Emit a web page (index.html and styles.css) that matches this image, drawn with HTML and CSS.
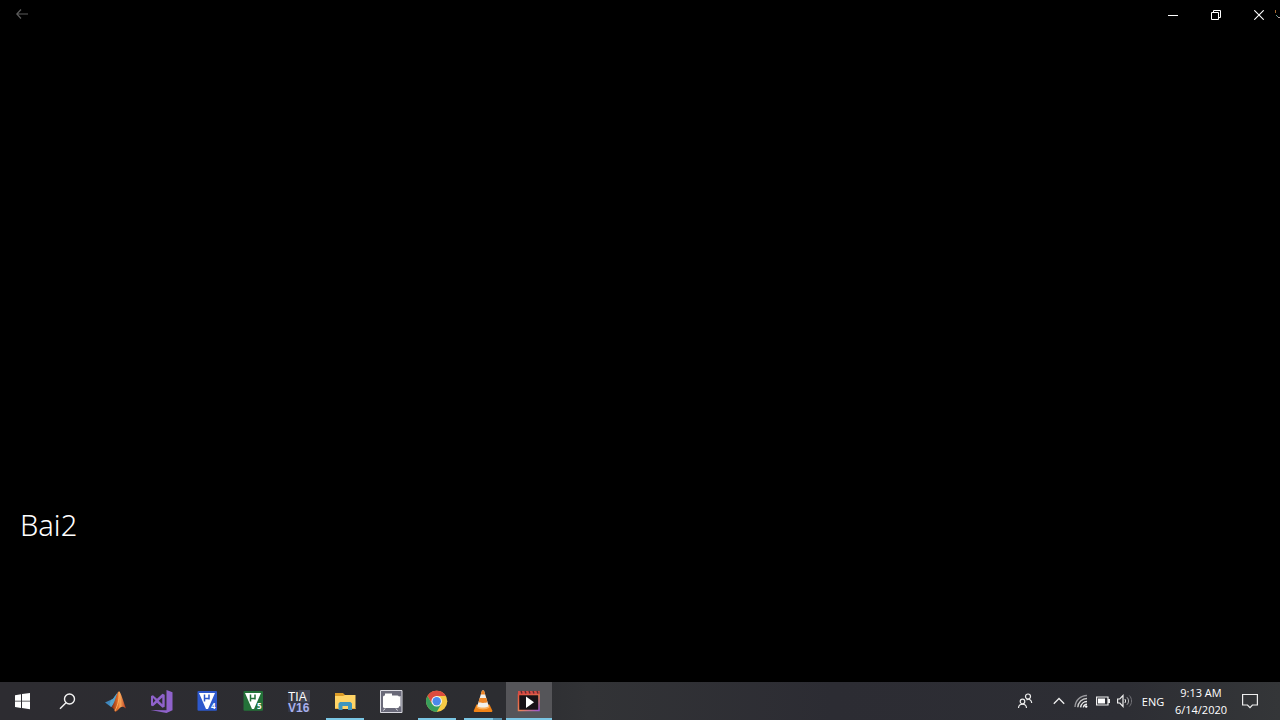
FILE: index.html
```html
<!DOCTYPE html>
<html lang="en">
<head>
    <meta charset="UTF-8">
    <meta name="viewport" content="width=device-width, initial-scale=1.0">
    <title>Bai2</title>
    <link rel="stylesheet" href="styles.css">
</head>
<body>
    <main class="player">
        <header class="titlebar">
            <button class="back" aria-label="Back">
                <svg width="12" height="10" viewBox="0 0 12 10"><path d="M5 .5.8 5 5 9.5M1 5h11" fill="none" stroke="#5c5c5c" stroke-width="1.2"/></svg>
            </button>
            <div class="window-buttons">
                <button aria-label="Minimize">
                    <svg width="10" height="10" viewBox="0 0 10 10"><path d="M0 5.5h10" stroke="#fff"/></svg>
                </button>
                <button aria-label="Restore">
                    <svg width="10" height="10" viewBox="0 0 10 10"><path d="M.5 2.5h7v7h-7zM2.5 2.5v-2h7v7h-2" fill="none" stroke="#fff"/></svg>
                </button>
                <button aria-label="Close">
                    <svg width="10" height="10" viewBox="0 0 10 10"><path d="M.3.3l9.4 9.4M9.7.3.3 9.7" stroke="#fff" stroke-width="1.1"/></svg>
                </button>
            </div>
            <svg class="edge" width="5" height="10" viewBox="0 0 5 10"><path d="M.5 0v3" stroke="#a4682f"/><path d="M1 5l2 2" stroke="#6c9c90"/><path d="M3 7.500h2" stroke="#b9a0a0"/></svg>
        </header>
        <h1 class="video-title">Bai2</h1>
    </main>

    <footer class="taskbar">
        <nav class="apps">
            <button aria-label="Start">
                <svg viewBox="0 0 46 38"><path d="M15 13.200l6-.9v6.400h-6zM22 12.100l8-1.100v7.700h-8zM15 19.600h6V26l-6-.9zM22 19.600h8V27.200l-8-1.100z" fill="#fff"/></svg>
            </button>
            <button aria-label="Search">
                <svg viewBox="0 0 46 38"><circle cx="23.500" cy="17" r="5" fill="none" stroke="#f4f4f4" stroke-width="1.400"/><path d="M20 20.700l-6 6" stroke="#f4f4f4" stroke-width="1.400"/></svg>
            </button>
            <button aria-label="MATLAB">
                <svg viewBox="0 0 46 38">
                    <defs><linearGradient id="peak"><stop offset="0" stop-color="#7e2c18"/><stop offset=".45" stop-color="#e8702a"/><stop offset=".6" stop-color="#f7a457"/><stop offset="1" stop-color="#b8341b"/></linearGradient></defs>
                    <path d="M13 20.500l6-2.700c2-.5 3-2.500 4.500-4.300l1 5-5.500 6.800c-1.500-1.800-3.500-3-6-4.800z" fill="#3f87bd"/>
                    <path d="M19 18c3-1 4.500-5.500 7-8l-3 9-3.500 6-2-2.500z" fill="#56a5ce"/>
                    <path d="M19.500 25c3-2.500 4.500-13 7.500-16 2 1.500 4.500 11 7 17.500-2.500-2-4-2.500-6-.7-1.500 1.500-3 3.600-5 4.200-.5-2.300-1.500-4-3.500-5z" fill="url(#peak)"/>
                    <path d="M27 10c.5 5-.5 12-4 19" fill="none" stroke="#ffc16b" stroke-width=".8"/>
                </svg>
            </button>
            <button aria-label="Visual Studio">
                <svg viewBox="0 0 46 38"><path d="M28.500 8l6 2.300v18L28.500 31l-16-3 16 .2zM13 14l2-.8 4 3.600 5.500-5 2.200 1v12l-2.200 1-5.500-5-4 3.500-2-.8zM15 16v5l2.500-2.500zM24.300 15.400l-3.600 3.400 3.600 3.400z" fill="#8f62cb" fill-rule="evenodd"/></svg>
            </button>
            <button aria-label="Keil uVision4">
                <svg viewBox="0 0 46 38"><rect x="13.500" y="9" width="19.500" height="19.700" rx="1" fill="#2d58cc"/><path d="M15 11h16l-7 16h-2z" fill="#fff"/><path d="M20.500 12.500v7M20.500 16.500h4.500v-4M25 16v1.500" fill="none" stroke="#2d58cc" stroke-width="1.500"/><text class="badge" x="27" y="27">4</text></svg>
            </button>
            <button aria-label="Keil uVision5">
                <svg viewBox="0 0 46 38"><rect x="13.500" y="9" width="19.500" height="19.700" rx="1" fill="#247139"/><path d="M15 11h16l-7 16h-2z" fill="#fff"/><path d="M20.500 12.500v7M20.500 16.500h4.500v-4M25 16v1.500" fill="none" stroke="#247139" stroke-width="1.500"/><text class="badge" x="27" y="27">5</text></svg>
            </button>
            <button aria-label="TIA Portal V16">
                <svg viewBox="0 0 46 38"><path d="M12 8h22v22H12z" fill="#343744"/><path d="M23 8h11v12H23z" fill="#414554"/><text class="tia" x="12" y="19">TIA</text><text class="tia version" x="12" y="30">V16</text></svg>
            </button>
            <button class="running" aria-label="File Explorer">
                <svg viewBox="0 0 46 38"><path d="M13 11h8l2 2h10v4H13z" fill="#dc9c27"/><path d="M13 14h8l2-1h10.500v14H13z" fill="#ffd466"/><path d="M16.500 28v-6.500l1.500-1.500h10.500l1.500 1.500V28h-4v-4h-5.500v4z" fill="#3e95bd"/><path d="M13 26h3.500v1H13zM30 26h3.500v1H30z" fill="#edb03f"/></svg>
            </button>
            <button aria-label="Screen Recorder">
                <svg viewBox="0 0 46 38"><path d="M12.500 8.500h21.500v22H12.500z" fill="#696979" stroke="#d9d9e0"/><rect x="15" y="13.500" width="16" height="12.500" rx="1.500" fill="#fff"/><path d="M17 11.500h7V14h-7zM30 15l2.500-1v10.500L30 24z" fill="#fff"/><path d="M17 26.500l-1.500 2M28 26.500l1.500 2" stroke="#e4e4ea"/></svg>
            </button>
            <button class="running" aria-label="Google Chrome">
                <svg viewBox="0 0 46 38"><circle cx="22.700" cy="19.300" r="10.600" fill="#f7cb45"/><path d="M13.500 14a10.600 10.600 0 0 1 18.400 0H22.700l-4.600 8z" fill="#dc4b3e"/><path d="M13.500 14a10.600 10.600 0 0 0 9.200 15.900l4.600-8-9.200 0z" fill="#389e5c"/><circle cx="22.700" cy="19.300" r="5.300" fill="#f5f5f5"/><circle cx="22.700" cy="19.300" r="4.200" fill="#4b89ec"/></svg>
            </button>
            <button class="running grouped" aria-label="VLC media player">
                <svg viewBox="0 0 46 38"><path d="M16.500 22.500h13l3 6.500-.7 1H14.300l-.7-1z" fill="#f08316"/><path d="M22 8.500h2L29 25c-2 2.200-10 2.200-12 0z" fill="#f2f0ea"/><path d="M22 8.500h2l1.200 4h-4.400zM19.700 16h6.600l1.200 4c-2 1.200-7 1.200-9 0z" fill="#ee8424"/><path d="M17 24l-.5 1.500c3 2.500 10 2.500 13 0L29 24c-3 2-9 2-12 0z" fill="#fbb05a"/></svg>
            </button>
            <button class="running active" aria-label="Movies &amp; TV">
                <svg viewBox="0 0 46 38">
                    <defs><linearGradient id="frame" x1="0" y1="0" x2="1" y2="1"><stop offset="0" stop-color="#e6533b"/><stop offset=".55" stop-color="#e98359"/><stop offset="1" stop-color="#9b59cf"/></linearGradient></defs>
                    <path d="M12.500 12.500h20.500v16H12.500z" fill="#171216" stroke="url(#frame)" stroke-width="1.500"/><path d="M12 9h21.700v3.500H12z" fill="#d54c45"/><path d="M15 9l1 2.500M19 9l1 2.500M23 9l1 2.500M27 9l1 2.500M31 9l1 2.500" stroke="#612c2f" stroke-width="1.400"/><path d="M20 14.500v11.500l8-5.700z" fill="#fff"/>
                </svg>
            </button>
        </nav>
        <div class="tray">
            <button class="people" aria-label="People">
                <svg width="16" height="16" viewBox="0 0 16 16"><g fill="none" stroke="#eee" stroke-width="1.200"><circle cx="5.500" cy="8.500" r="2.300"/><path d="M1.500 15c.2-5 7.800-5 8 0"/><circle cx="11" cy="3.500" r="2.500"/><path d="M9.500 7c2.500-1.700 5-.2 5.200 3"/></g></svg>
            </button>
            <button aria-label="Show hidden icons">
                <svg width="12" height="8" viewBox="0 0 12 8"><path d="M.8 6.700L6 1.500l5.200 5.200" fill="none" stroke="#eee" stroke-width="1.300"/></svg>
            </button>
            <button aria-label="Network">
                <svg width="14" height="14" viewBox="0 0 14 14"><g fill="none" stroke-width="1.400"><path d="M1 13A12 12 0 0 1 13 1.500" stroke="#9a9a9e"/><path d="M3.800 13.300A9.300 9.300 0 0 1 13 4.500" stroke="#ccc"/><path d="M6.600 13.300A6.500 6.500 0 0 1 13 7.500M9.300 13.300a4 4 0 0 1 3.700-3" stroke="#eee"/></g><circle cx="12.200" cy="12.600" r="1.200" fill="#fff"/></svg>
            </button>
            <button aria-label="Battery">
                <svg width="14" height="10" viewBox="0 0 14 10"><path d="M.6 1h11.400v8H.6zM12.500 3.500h1v3h-1z" fill="none" stroke="#eee" stroke-width="1.200"/><path d="M2 2.500h7v5H2z" fill="#fff"/></svg>
            </button>
            <button aria-label="Volume">
                <svg width="16" height="14" viewBox="0 0 16 14"><g fill="none"><path d="M.6 5h2.200L6 1.600v10.800L2.800 9H.6z" stroke="#eee" stroke-width="1.200"/><path d="M7.800 5c1 1 1 3 0 4" stroke="#eee"/><path d="M10 3.300c2 2 2 5.400 0 7.400" stroke="#b5b5b7"/><path d="M12.300 1.500c3 3 3 8 0 11" stroke="#737378"/></g></svg>
            </button>
            <button class="lang">ENG</button>
            <button class="clock"><time datetime="2020-06-14T09:13">9:13 AM<br>6/14/2020</time></button>
            <button class="notifications" aria-label="Notifications">
                <svg width="16" height="16" viewBox="0 0 16 16"><path d="M.6 1.500h14.800v10.500h-5L8 14.600 5.500 12H.6z" fill="none" stroke="#eee" stroke-width="1.200"/></svg>
            </button>
        </div>
    </footer>
</body>
</html>
```

FILE: styles.css
```css
* {
    box-sizing: border-box;
}
body {
    margin: 0;
    min-height: 100vh;
    display: flex;
    flex-direction: column;
    background: #000;
    color: #fff;
    font-family: "Open Sans", "Noto Sans", sans-serif;
}
button {
    display: flex;
    align-items: center;
    justify-content: center;
    padding: 0;
    border: 0;
    background: none;
    color: inherit;
    font: inherit;
}
svg {
    display: block;
}
.player {
    flex: 1;
    display: flex;
    flex-direction: column;
    justify-content: space-between;
}
.titlebar {
    position: relative;
    display: flex;
    justify-content: space-between;
    height: 30px;
}
.back {
    width: 44px;
    height: 28px;
}
.window-buttons {
    display: flex;
}
.window-buttons button {
    width: 43px;
}
.edge {
    position: absolute;
    top: 10px;
    right: 0;
}
.video-title {
    margin: 0;
    padding: 0 20px 137px;
    font-family: "Noto Sans", sans-serif;
    font-size: 29px;
    font-weight: 300;
    line-height: 40px;
}

/* Taskbar */
.taskbar {
    display: flex;
    justify-content: space-between;
    height: 38px;
    background: linear-gradient(90deg, #2d2c31, #2c2d31 40%, #323336 46%, #2c2c33 65%, #2d2e34 88%, #343638);
    font-size: 11px;
}
.apps,
.tray {
    display: flex;
}
.apps button {
    position: relative;
    width: 46px;
}
.apps svg {
    width: 46px;
    height: 38px;
}
.running::after {
    content: "";
    position: absolute;
    right: 4px;
    bottom: 0;
    left: 4px;
    height: 2px;
    background: #7ac6e4;
}
.grouped::after {
    background: linear-gradient(90deg, #7ac6e4 29px, #5792ae 29px);
}
.apps .active {
    background: #555559;
}
.active::after {
    right: 0;
    left: 0;
}
.badge {
    fill: #fff;
    font-size: 8px;
    font-weight: 700;
}
.tia {
    fill: #fff;
    font-family: "Liberation Sans", sans-serif;
    font-size: 12px;
}
.version {
    fill: #a8b0ed;
    font-weight: 700;
}
.tray {
    padding-right: 12px;
}
.tray button {
    width: 22px;
}
.tray .people {
    width: 46px;
}
.tray .lang {
    width: 34px;
}
.tray .clock {
    width: 62px;
    line-height: 17px;
}
.tray .notifications {
    width: 36px;
}
```
